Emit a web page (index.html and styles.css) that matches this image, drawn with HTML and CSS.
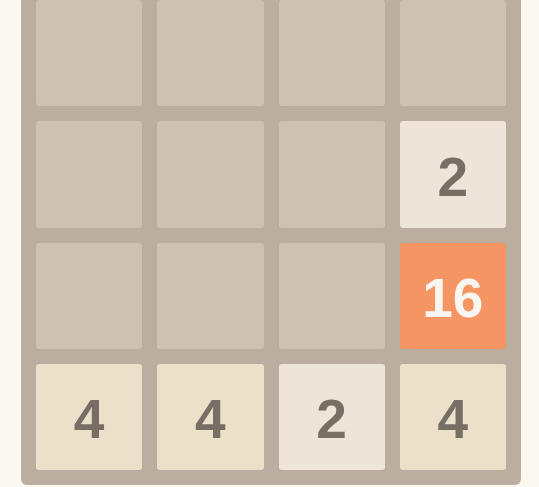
FILE: index.html
```html
<!DOCTYPE html>
<html lang="en">
<head>
    <meta charset="UTF-8">
    <meta name="viewport" content="width=device-width, initial-scale=1.0">
    <title>2048</title>
    <link rel="stylesheet" href="styles.css">
</head>
<body>
<!-- game board: 4x4 grid -->
<div class="game-container">
  <div class="grid">
    <div class="cell"></div>
    <div class="cell"></div>
    <div class="cell"></div>
    <div class="cell"></div>

    <div class="cell"></div>
    <div class="cell"></div>
    <div class="cell"></div>
    <div class="cell tile-2">2</div>

    <div class="cell"></div>
    <div class="cell"></div>
    <div class="cell"></div>
    <div class="cell tile-16">16</div>

    <div class="cell tile-4">4</div>
    <div class="cell tile-4">4</div>
    <div class="cell tile-2">2</div>
    <div class="cell tile-4">4</div>
  </div>
</div>
</body>
</html>
```

FILE: styles.css
```css
/* Page */
body {
    margin: 0;
    background-color: #faf8ef;
    font-family: "Liberation Sans", Arial, sans-serif;
    overflow: hidden;
}

/* Board */
.game-container {
    margin-top: -15px;
    margin-left: 21px;
    width: 500px;
    height: 500px;
    padding: 15px;
    box-sizing: border-box;
    background-color: #bbada0;
    border-radius: 6px;
}

.grid {
    display: grid;
    grid-template-columns: repeat(4, 1fr);
    grid-template-rows: repeat(4, 1fr);
    gap: 15px;
    height: 100%;
}

/* Cells and tiles */
.cell {
    border-radius: 3px;
    background-color: #cdc1b4;
    display: flex;
    align-items: center;
    justify-content: center;
    padding-top: 5px;
    font-size: 55px;
    font-weight: bold;
    color: #776e65;
}

.tile-2 {
    background-color: #eee4da;
}

.tile-4 {
    background-color: #ede0c8;
}

.tile-16 {
    background-color: #f59563;
    color: #f9f6f2;
}
```
